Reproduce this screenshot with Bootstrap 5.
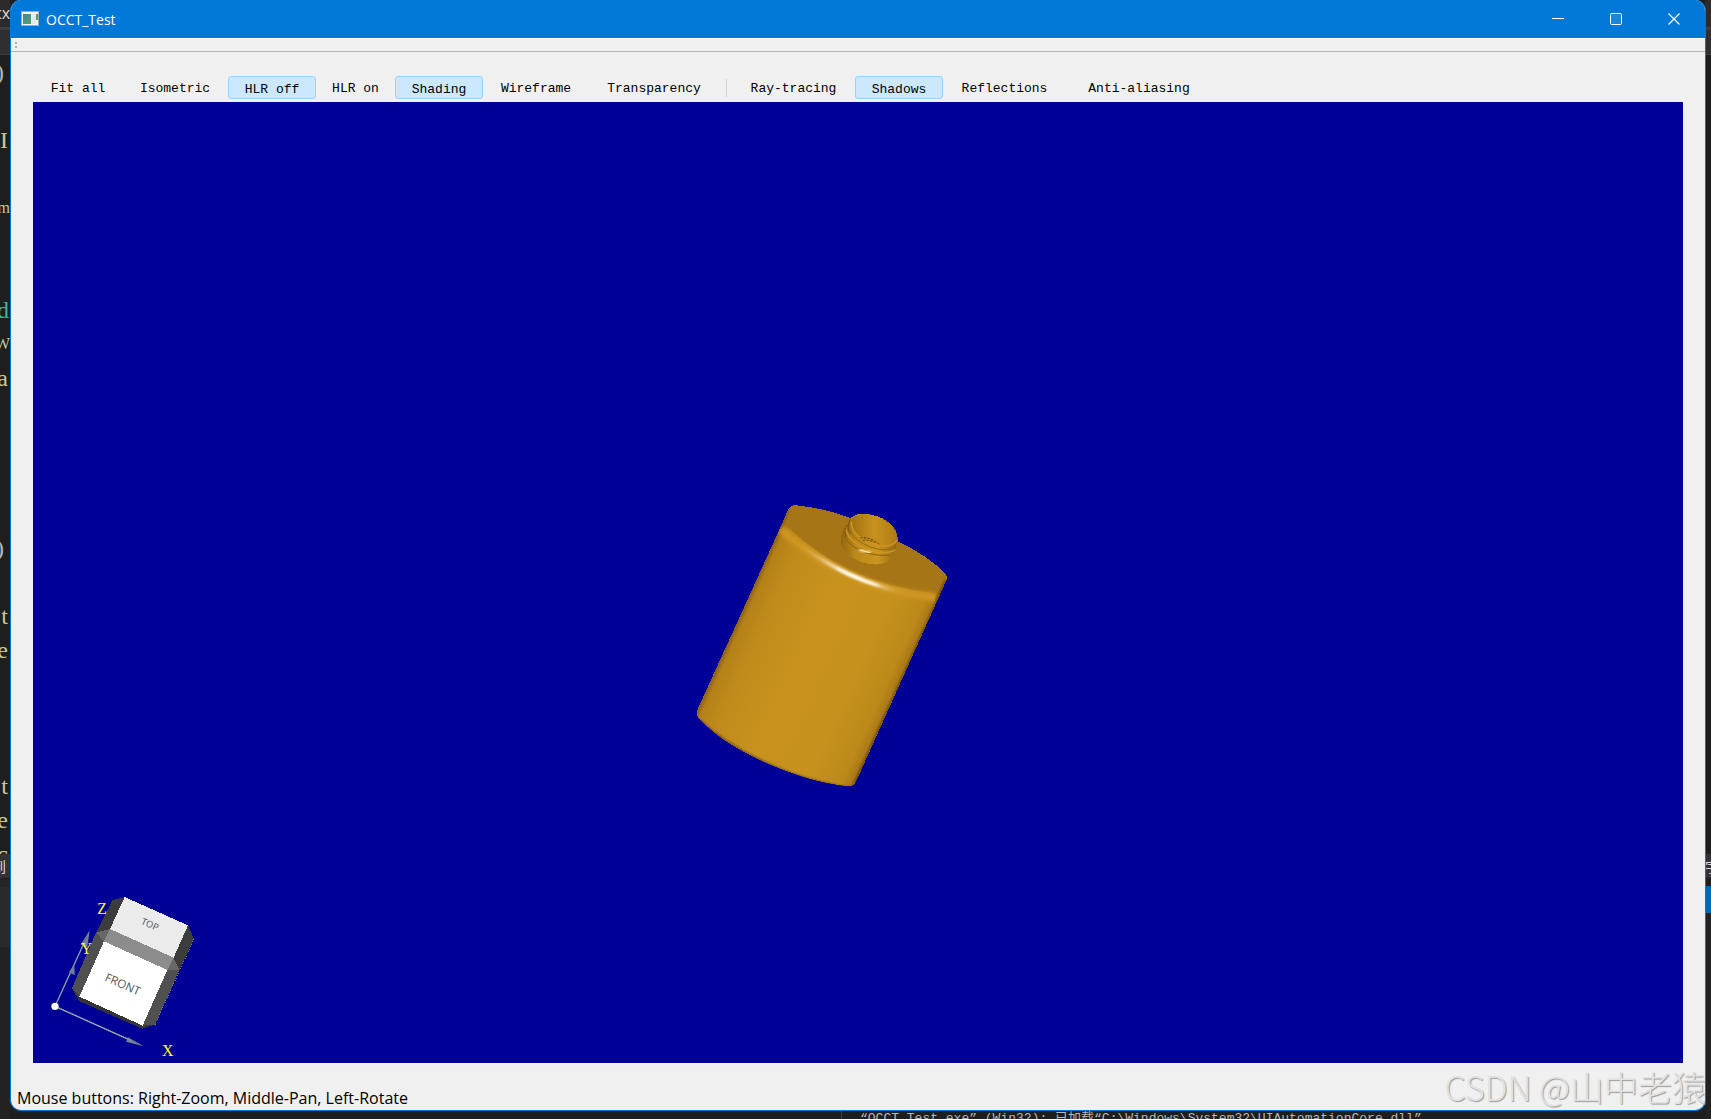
<!DOCTYPE html>
<html lang="en">
<head>
<meta charset="utf-8">
<meta name="viewport" content="width=device-width, initial-scale=1">
<title>OCCT_Test</title>
<link href="https://cdn.jsdelivr.net/npm/bootstrap@5.3.0/dist/css/bootstrap.min.css" rel="stylesheet">
<style>
  body { background: #1e1e1e; font-family: "Open Sans", "Noto Sans CJK SC", sans-serif; }

  /* editor visible behind the window */
  .ide-layer { inset: 0; z-index: 0; }
  .ide-edge { width: 10px; background: #1e1e1e; }
  .ide-edge.edge-right { width: 6px; }
  .ide-tabs { height: 27px; background: #2b2b2d; font: 16px/27px "Open Sans", sans-serif; color: #ddd; }
  .ide-nav { height: 28px; background: #2f2f32; border-top: 3px solid #3e3e42; border-bottom: 1px solid #3e3e42; }
  .code-area { height: 799px; }
  .code-line { height: 34px; font: 24px/34px "Liberation Serif", serif; color: #c8c896; padding-right: 2px; }
  .code-wide { padding-right: 0; font-size: 16px; }
  .code-paren { color: #b4b4b4; padding-right: 6px; }
  .code-type { color: #46b496; padding-right: 1px; }
  .ide-status { height: 24px; background: #333337; font: 14px/24px "Noto Sans CJK SC", sans-serif; color: #ddd; }
  .ide-pane { height: 68px; margin-top: 1px; background: #2a2a2d; border-top: 8px solid #252527; }
  .ide-selected { height: 27px; margin-top: 8px; background: #0068b3; }
  .ide-foot { background: #222; }
  .ide-output { left: 841px; bottom: 0; height: 8px; padding-left: 18px; border-left: 1px solid #444;
    font: 13px/16px "Liberation Mono", "Noto Sans CJK SC", monospace; color: #b8b8b8; }

  /* application window */
  .desk { padding: 0 5px 8px 10px; }
  .app-window { z-index: 1; background: #f0f0f0; border: 1px solid #0078d7; border-top: 0; border-radius: 11px; }
  .title-bar { height: 38px; background: #0078d7; color: #fff; font-size: 14px; padding: 0 2px 0 10px; }
  .title-name { margin-left: 7px; }
  .win-btn { width: 58px; height: 38px; border: 0; background: none; color: #fff; padding: 0; }
  .dock-strip { height: 14px; border-top: 1px solid #fff; border-bottom: 1px solid #b4b4b4; padding: 3px 4px; }
  .workspace { padding: 24px 22px 0; }
  .tool-row { gap: 1px; padding-left: 1px; margin-bottom: 3px; }
  .tool-btn { height: 23px; border: 1px solid transparent; border-radius: 3px; background: none; color: #000;
    font: 13px/18px "Liberation Mono", monospace; padding: 3px 0 0; white-space: nowrap; }
  .tool-btn[aria-pressed="true"] { background: #cce8ff; border-color: #99d1ff; padding-top: 4px; }
  .size-xs { width: 77px; }
  .size-sm { width: 88px; }
  .size-md { width: 104px; }
  .size-lg { width: 121px; }
  .size-xl { width: 130px; }
  .size-xxl { width: 146px; }
  .tool-sep { width: 1px; height: 18px; margin: 3px 5px 0 6px; background: #d0d0d0; }
  .viewport3d { background: #000096; min-height: 400px; }
  .model-view { left: calc(50% - 178px); top: calc(50% - 93px); }
  .cube-view { left: 7px; bottom: 0; }
  .status-line { height: 47px; padding: 23px 6px 0; font-size: 16px; line-height: 24px; color: #000; }
  .author-mark { right: 5px; bottom: 8px; z-index: 2; font: 300 34px/48px "Noto Sans CJK SC", sans-serif;
    color: #e2e2e2; text-shadow: 1px 1px 1px #999; }
</style>
</head>
<body class="min-vh-100">
<div class="ide-layer position-absolute d-flex justify-content-between overflow-hidden" aria-hidden="true">
  <div class="ide-edge d-flex flex-column overflow-hidden">
    <div class="ide-tabs d-flex justify-content-end">xx</div>
    <div class="ide-nav"></div>
    <div class="code-area overflow-hidden">
      <div class="code-line code-paren d-flex justify-content-end">)</div>
      <div class="code-line"></div>
      <div class="code-line d-flex justify-content-end">I</div>
      <div class="code-line"></div>
      <div class="code-line code-wide d-flex justify-content-end">m</div>
      <div class="code-line"></div>
      <div class="code-line"></div>
      <div class="code-line code-type d-flex justify-content-end">d</div>
      <div class="code-line code-wide d-flex justify-content-end">W</div>
      <div class="code-line d-flex justify-content-end">a</div>
      <div class="code-line"></div>
      <div class="code-line"></div>
      <div class="code-line"></div>
      <div class="code-line"></div>
      <div class="code-line code-paren d-flex justify-content-end">)</div>
      <div class="code-line"></div>
      <div class="code-line d-flex justify-content-end">t</div>
      <div class="code-line d-flex justify-content-end">e</div>
      <div class="code-line"></div>
      <div class="code-line"></div>
      <div class="code-line"></div>
      <div class="code-line d-flex justify-content-end">t</div>
      <div class="code-line d-flex justify-content-end">e</div>
      <div class="code-line d-flex justify-content-end">c</div>
    </div>
    <div class="ide-status d-flex justify-content-end pe-1">到</div>
    <div class="ide-pane"></div>
    <div class="ide-foot flex-grow-1"></div>
  </div>
  <div class="ide-edge edge-right d-flex flex-column overflow-hidden">
    <div class="ide-tabs"></div>
    <div class="ide-nav"></div>
    <div class="code-area"></div>
    <div class="ide-status">字</div>
    <div class="ide-selected"></div>
    <div class="ide-foot flex-grow-1"></div>
  </div>
  <div class="ide-output position-absolute overflow-hidden text-nowrap">“OCCT_Test.exe” (Win32): 已加载“C:\Windows\System32\UIAutomationCore.dll” 。</div>
</div>

<div class="desk d-flex vh-100 position-relative">
  <main class="app-window position-relative d-flex flex-column flex-grow-1 overflow-hidden">
    <header class="title-bar d-flex align-items-center">
      <svg width="18" height="16" viewBox="0 0 18 16" aria-hidden="true">
        <defs><linearGradient id="appIcon" x2="1" y2="1"><stop stop-color="#4a7f9c"/><stop offset="1" stop-color="#4fa865"/></linearGradient></defs>
        <rect width="18" height="15" fill="#a9a9a9"/><rect x="1" y="1" width="16" height="13" fill="#f6f6f6"/>
        <rect x="2" y="3" width="8" height="10" fill="url(#appIcon)"/><rect x="11" y="3" width="4" height="10" fill="#e6e9e6"/><rect x="15" y="3" width="2" height="6" fill="#58a070"/>
      </svg>
      <span class="title-name">OCCT_Test</span>
      <div class="ms-auto d-flex">
        <button class="win-btn d-flex align-items-center justify-content-center" type="button" aria-label="Minimize"><svg width="12" height="12"><path d="M0 5.500H12" stroke="#fff"/></svg></button>
        <button class="win-btn d-flex align-items-center justify-content-center" type="button" aria-label="Maximize"><svg width="12" height="12"><rect x=".5" y=".5" width="11" height="11" rx="1" fill="#1a86db" stroke="#fff"/></svg></button>
        <button class="win-btn d-flex align-items-center justify-content-center" type="button" aria-label="Close"><svg width="12" height="12"><path d="M.5 .5l11 11M11.500 .5l-11 11" stroke="#fff" stroke-width="1.200"/></svg></button>
      </div>
    </header>
    <div class="dock-strip d-flex">
      <svg width="3" height="7" aria-hidden="true"><path d="M0 0h2v2h-2zM0 4h2v2h-2z" fill="#b0b0b0"/></svg>
    </div>

    <section class="workspace d-flex flex-column flex-grow-1">
      <div class="tool-row d-flex" role="toolbar" aria-label="View">
        <button class="tool-btn size-sm" type="button">Fit all</button>
        <button class="tool-btn size-md" type="button">Isometric</button>
        <button class="tool-btn size-sm" type="button" aria-pressed="true">HLR off</button>
        <button class="tool-btn size-xs" type="button" aria-pressed="false">HLR on</button>
        <button class="tool-btn size-sm" type="button" aria-pressed="true">Shading</button>
        <button class="tool-btn size-md" type="button" aria-pressed="false">Wireframe</button>
        <button class="tool-btn size-xl" type="button">Transparency</button>
        <div class="tool-sep"></div>
        <button class="tool-btn size-lg" type="button" aria-pressed="false">Ray-tracing</button>
        <button class="tool-btn size-sm" type="button" aria-pressed="true">Shadows</button>
        <button class="tool-btn size-lg" type="button" aria-pressed="false">Reflections</button>
        <button class="tool-btn size-xxl" type="button" aria-pressed="false">Anti-aliasing</button>
      </div>

      <div class="viewport3d position-relative flex-grow-1 overflow-hidden">
        <svg class="model-view position-absolute" width="290" height="310" viewBox="0 0 870 930" role="img" aria-label="Bottle model">
          <defs>
            <linearGradient id="bodyFill" gradientUnits="userSpaceOnUse" x1="175" y1="390" x2="649" y2="605">
              <stop stop-color="#8a6010"/><stop offset=".03" stop-color="#b48119"/><stop offset=".14" stop-color="#c08b1b"/><stop offset=".4" stop-color="#c8921d"/><stop offset=".75" stop-color="#c6911c"/><stop offset=".93" stop-color="#bc891a"/><stop offset=".98" stop-color="#ac7a17"/><stop offset="1" stop-color="#745010"/>
            </linearGradient>
            <linearGradient id="shine" gradientUnits="userSpaceOnUse" x1="350" y1="150" x2="680" y2="310">
              <stop stop-color="#d49a28" stop-opacity="0"/><stop offset=".3" stop-color="#eac888"/><stop offset=".52" stop-color="#fffdf0"/><stop offset=".7" stop-color="#ffedc8"/><stop offset="1" stop-color="#d49a28" stop-opacity="0"/>
            </linearGradient>
            <linearGradient id="neckFill"><stop stop-color="#94680f"/><stop offset=".25" stop-color="#bb881a"/><stop offset=".65" stop-color="#cb951f"/><stop offset="1" stop-color="#956811"/></linearGradient>
            <linearGradient id="boreFill"><stop stop-color="#a17114"/><stop offset=".5" stop-color="#c8921d"/><stop offset="1" stop-color="#b07c17"/></linearGradient>
            <filter id="soft3"><feGaussianBlur stdDeviation="3"/></filter>
            <filter id="soft6"><feGaussianBlur stdDeviation="6"/></filter>
            <clipPath id="bottleClip"><path d="M325 57Q333 44 350 46Q435 55 510 84L650 152Q740 195 795 249Q803 259 799 271L768 340L532 866Q523 890 507 889Q430 880 363 858Q230 815 130 748Q85 716 55 682Q48 672 53 658L300 115Z"/></clipPath>
          </defs>
          <path d="M325 57Q333 44 350 46Q435 55 510 84L650 152Q740 195 795 249Q803 259 799 271L768 340L532 866Q523 890 507 889Q430 880 363 858Q230 815 130 748Q85 716 55 682Q48 672 53 658L300 115Z" fill="#a67516" shape-rendering="crispEdges"/>
          <g clip-path="url(#bottleClip)">
            <path d="M296 122Q310 104 330 118Q410 193 510 240Q630 295 755 309Q772 312 768 340L532 866Q523 890 507 889Q230 870 40 690L53 658Z" fill="url(#bodyFill)"/>
            <path d="M50 684Q130 757 230 806Q360 872 510 895" fill="none" stroke="#80590e" stroke-width="9" filter="url(#soft3)"/>
            <path d="M306 121Q400 207 500 252Q620 307 762 321" fill="none" stroke="#cf9722" stroke-width="22" stroke-linecap="round" filter="url(#soft6)"/>
            <path d="M325 135Q410 207 505 252Q610 302 740 318" fill="none" stroke="url(#shine)" stroke-width="11" filter="url(#soft3)"/>
            <path d="M470 235Q520 261 596 287" fill="none" stroke="#fffbed" stroke-width="5" filter="url(#soft3)"/>
            <path d="M328 58L300 118" stroke="#80590e" stroke-width="6" filter="url(#soft3)"/>
            <path d="M798 270L768 335" stroke="#6e4c0c" stroke-width="8" filter="url(#soft3)"/>
          </g>
          <g>
            <path d="M484 135L484 165Q500 202 550 218Q585 228 612 220Q628 215 630 199Q642 196 645 182L653 150Q655 110 605 84Q550 62 520 78Q505 86 507 97Q490 108 489 125Z" fill="url(#neckFill)" shape-rendering="crispEdges"/>
            <path d="M515 96Q512 78 545 74Q585 72 625 100Q655 125 650 151Q645 168 615 168Q570 165 535 138Q512 118 515 96Z" fill="url(#boreFill)"/>
            <path d="M515 96Q512 118 535 138Q570 165 615 168Q642 168 651 150" fill="none" stroke="#cc961f" stroke-width="4"/>
            <path d="M507 100Q505 128 530 148Q575 181 620 179Q637 177 648 168" fill="none" stroke="#986a10" stroke-width="3"/>
            <path d="M498 108Q494 132 522 155Q566 190 618 188Q635 186 646 180" fill="none" stroke="#cf9823" stroke-width="4"/>
            <path d="M489 124Q491 148 521 170Q565 200 630 196" fill="none" stroke="#8c630f" stroke-width="3"/>
            <path d="M512 86Q497 112 510 130M500 105Q490 120 498 140" fill="none" stroke="#76520b" stroke-width="3"/>
            <path d="M535 178Q553 187 573 188" fill="none" stroke="#fff0c0" stroke-width="5" filter="url(#soft3)"/>
            <path d="M541 181L570 188" stroke="#ffe7ad" stroke-width="3"/>
            <path d="M541 144Q570 139 600 164M548 151Q568 149 586 158" fill="none" stroke="#634509" stroke-width="3" stroke-dasharray="7 4"/>
          </g>
        </svg>

        <svg class="cube-view position-absolute" width="170" height="183" viewBox="0 0 510 549" role="img" aria-label="View cube">
          <g shape-rendering="crispEdges">
            <path d="M217 61L254 51L210 147L168 158Z" fill="#3c3c3c"/>
            <path d="M168 158L192 184L118 350L96 324Z" fill="#505050"/>
            <path d="M254 51L444 136L401 233L210 147Z" fill="#ebebeb"/>
            <path d="M444 136L462 177L418 270L401 233Z" fill="#3c3c3c"/>
            <path d="M210 147L401 233L382 270L192 184Z" fill="#8c8c8c"/>
            <path d="M168 158L210 147L192 184ZM401 233L418 270L382 270Z" fill="#686868"/>
            <path d="M192 184L382 270L308 437L118 350Z" fill="#fff"/>
            <path d="M382 270L418 270L345 434L308 437Z" fill="#505050"/>
            <path d="M96 324L118 350L308 437L345 434L306 446L117 363Z" fill="#353535"/>
            <path d="M462 177L345 434" stroke="#a8a8a8" stroke-width="2" stroke-dasharray="3 5"/>
          </g>
          <g font-family="Open Sans, sans-serif" fill="#555" text-anchor="middle">
            <text transform="translate(326 142) rotate(23)" font-size="28">TOP</text>
            <text transform="translate(243 324) rotate(24)" font-size="35">FRONT</text>
          </g>
          <g stroke="#8ba0a8" stroke-width="4" fill="#708090">
            <path d="M45 379L140 172M45 379L272 481"/>
            <path d="M149 151L122 194L142 202ZM103 252L87 277L104 286ZM311 499L264 472L258 485Z" stroke="none"/>
          </g>
          <path d="M45 379L272 481" stroke="#e0e0c8" stroke-width="2" stroke-dasharray="3 4"/>
          <circle cx="45" cy="379" r="11" fill="#fff"/>
          <g font-family="Liberation Serif, serif" font-size="47" fill="#ffff28" text-anchor="middle">
            <text x="186" y="102">Z</text><text x="139" y="221">Y</text><text x="383" y="528">X</text>
          </g>
        </svg>
      </div>
    </section>
    <footer class="status-line">Mouse buttons: Right-Zoom, Middle-Pan, Left-Rotate</footer>
  </main>
  <div class="author-mark position-absolute text-nowrap">CSDN @山中老猿</div>
</div>
<script src="https://cdn.jsdelivr.net/npm/bootstrap@5.3.0/dist/js/bootstrap.bundle.min.js"></script>
</body>
</html>
